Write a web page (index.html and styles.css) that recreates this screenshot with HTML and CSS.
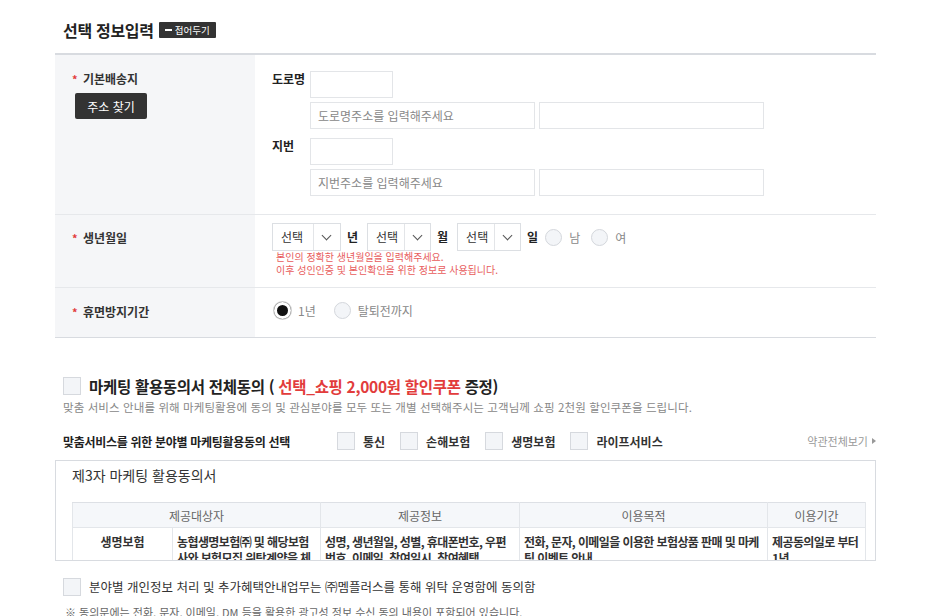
FILE: index.html
```html
<!DOCTYPE html>
<html lang="ko">
<head>
    <meta charset="UTF-8">
    <title>선택 정보입력</title>
    <link rel="stylesheet" href="styles.css">
</head>
<body>
    <div class="wrap">
        <div class="sec-head">
            <h2>선택 정보입력</h2>
            <span class="fold-btn"><i class="bar"></i>접어두기</span>
        </div>

        <div class="form">
            <div class="row row-addr">
                <div class="th">
                    <div class="label"><em>*</em> 기본배송지</div>
                    <button class="btn-dark">주소 찾기</button>
                </div>
                <div class="td">
                    <div class="addr">
                        <span class="addr-name">도로명</span>
                        <div class="addr-fields">
                            <div class="box zip"></div>
                            <div class="line">
                                <div class="box wide ph">도로명주소를 입력해주세요</div>
                                <div class="box wide"></div>
                            </div>
                        </div>
                    </div>
                    <div class="addr">
                        <span class="addr-name">지번</span>
                        <div class="addr-fields">
                            <div class="box zip"></div>
                            <div class="line">
                                <div class="box wide ph">지번주소를 입력해주세요</div>
                                <div class="box wide"></div>
                            </div>
                        </div>
                    </div>
                </div>
            </div>

            <div class="row row-birth">
                <div class="th"><div class="label"><em>*</em> 생년월일</div></div>
                <div class="td">
                    <div class="birth">
                        <div class="select first"><span>선택</span><i class="chev"></i></div>
                        <b>년</b>
                        <div class="select"><span>선택</span><i class="chev"></i></div>
                        <b>월</b>
                        <div class="select"><span>선택</span><i class="chev"></i></div>
                        <b>일</b>
                        <label class="radio"><i></i>남</label>
                        <label class="radio"><i></i>여</label>
                    </div>
                    <p class="warn">본인의 정확한 생년월일을 입력해주세요.<br>이후 성인인증 및 본인확인을 위한 정보로 사용됩니다.</p>
                </div>
            </div>

            <div class="row row-dormant">
                <div class="th"><div class="label"><em>*</em> 휴면방지기간</div></div>
                <div class="td">
                    <label class="radio on"><i></i>1년</label>
                    <label class="radio"><i></i>탈퇴전까지</label>
                </div>
            </div>
        </div>

        <div class="mkt">
            <div class="mkt-all">
                <i class="chk"></i>
                <h3>마케팅 활용동의서 전체동의 ( <span class="red">선택_쇼핑 2,000원 할인쿠폰</span> 증정)</h3>
            </div>
            <p class="mkt-desc">맞춤 서비스 안내를 위해 마케팅활용에 동의 및 관심분야를 모두 또는 개별 선택해주시는 고객님께 쇼핑 2천원 할인쿠폰을 드립니다.</p>

            <div class="mkt-pick">
                <span class="pick-title">맞춤서비스를 위한 분야별 마케팅활용동의 선택</span>
                <label class="pick"><i class="chk"></i>통신</label>
                <label class="pick"><i class="chk"></i>손해보험</label>
                <label class="pick"><i class="chk"></i>생명보험</label>
                <label class="pick"><i class="chk"></i>라이프서비스</label>
                <a class="more">약관전체보기 <span class="tri"></span></a>
            </div>

            <div class="terms">
                <div class="terms-title">제3자 마케팅 활용동의서</div>
                <table>
                    <colgroup>
                        <col class="w1"><col class="w2"><col class="w3"><col class="w4"><col>
                    </colgroup>
                    <thead>
                        <tr><th colspan="2">제공대상자</th><th>제공정보</th><th>이용목적</th><th>이용기간</th></tr>
                    </thead>
                    <tbody>
                        <tr>
                            <td class="c">생명보험</td>
                            <td>농협생명보험㈜ 및 해당보험사와 보험모집 위탁계약을 체결한 대리점</td>
                            <td>성명, 생년월일, 성별, 휴대폰번호, 우편번호, 이메일, 참여일시, 참여혜택</td>
                            <td>전화, 문자, 이메일을 이용한 보험상품 판매 및 마케팅 이벤트 안내</td>
                            <td>제공동의일로 부터 1년</td>
                        </tr>
                    </tbody>
                </table>
            </div>

            <div class="agree">
                <i class="chk"></i>
                <span>분야별 개인정보 처리 및 추가혜택안내업무는 ㈜멤플러스를 통해 위탁 운영함에 동의함</span>
            </div>
            <p class="note">※ 동의문에는 전화, 문자, 이메일, DM 등을 활용한 광고성 정보 수신 동의 내용이 포함되어 있습니다.</p>
        </div>
    </div>
</body>
</html>
```

FILE: styles.css
```css
* { margin: 0; padding: 0; box-sizing: border-box; }
body {
    font-family: "Noto Sans CJK KR", "Noto Sans", sans-serif;
    color: #222;
    background: #fff;
    overflow: hidden;
}
.wrap { width: 821px; margin-left: 55px; }

/* section head */
.sec-head {
    display: flex; align-items: center; gap: 5px;
    height: 53px; padding: 7px 0 0 8px;
}
.sec-head h2 { font-size: 16px; font-weight: 700; letter-spacing: -0.3px; }
.fold-btn {
    display: inline-flex; align-items: center; gap: 3px;
    background: #333; color: #fff; font-size: 9.5px;
    height: 16px; padding: 0 6px 0 6px; border-radius: 1px;
}
.fold-btn .bar { width: 7px; height: 2px; background: #fff; }

/* form table */
.form { border-top: 2px solid #d8dbe0; border-bottom: 1px solid #d8dbe0; }
.row { display: grid; grid-template-columns: 200px 1fr; border-top: 1px solid #e6e8eb; }
.row:first-child { border-top: 0; }
.th { background: #f5f6f8; padding-left: 17px; }
.label { font-size: 12px; font-weight: 700; color: #333; }
.label em { font-style: normal; color: #e23c3c; font-size: 11px; margin-right: 2px; }
.td { padding-left: 17px; font-size: 12px; }

.row-addr { height: 159px; }
.row-addr .th { padding-top: 15px; }
.btn-dark {
    display: block; margin: 6px 0 0 3px;
    width: 72px; height: 26px; border: 0; border-radius: 2px;
    background: #333; color: #fff; font-family: inherit; font-size: 12px;
}
.row-addr .td { padding-top: 16px; }
.addr { display: flex; margin-bottom: 9px; }
.addr-name { width: 38px; font-weight: 700; font-size: 12px; line-height: 17px; margin-top: -1px; }
.addr-fields { display: flex; flex-direction: column; gap: 4px; }
.line { display: flex; gap: 4px; }
.box { height: 27px; border: 1px solid #e3e5e8; background: #fff; }
.box.zip { width: 83px; }
.box.wide { width: 225px; }
.box.ph { color: #888; font-size: 12px; line-height: 25px; padding-left: 7px; }

.row-birth { height: 73px; }
.row-birth .th { padding-top: 14px; }
.row-birth .td { padding-top: 8px; }
.birth { display: flex; align-items: center; }
.birth b { font-size: 12px; font-weight: 700; margin: 0 9px 0 6px; line-height: 20px; }
.select {
    display: flex; width: 64px; height: 28px;
    border: 1px solid #dcdfe3; font-size: 12px; color: #333;
}
.select.first { width: 69px; }
.select span { width: 37px; line-height: 26px; padding-left: 8px; border-right: 1px solid #e3e5e8; }
.select.first span { width: 41px; }
.chev { flex: 1; position: relative; }
.chev::after {
    content: ""; position: absolute; left: 9px; top: 8px;
    width: 6px; height: 6px;
    border-right: 1px solid #555; border-bottom: 1px solid #555;
    transform: rotate(45deg);
}
.birth .radio { margin-right: 11px; }
.birth b + .radio { margin-left: -2px; }
.warn { color: #e85c5c; font-size: 10px; line-height: 13px; margin: -1px 0 0 4px; }

.radio { display: inline-flex; align-items: center; gap: 7px; color: #888; font-size: 12px; margin-right: 18px; }
.radio i {
    width: 17px; height: 17px; border-radius: 50%;
    border: 1px solid #d4d7dc; background: #f3f5f8;
}
.radio.on i { background: #111; border: 0; box-shadow: inset 0 0 0 3px #fff, 0 0 0 1px #ccc; }

.row-dormant { height: 50px; }
.row-dormant .th { display: flex; align-items: center; padding-bottom: 2px; }
.row-dormant .td { display: flex; align-items: center; padding-left: 19px; padding-bottom: 4px; }

/* marketing */
.mkt { padding-top: 37px; }
.mkt-all { display: flex; align-items: center; gap: 8px; padding-left: 8px; }
.chk {
    display: inline-block; width: 18px; height: 18px;
    border: 1px solid #d6d9de; background: #f3f5f8; flex: none;
}
.mkt-all h3 { font-size: 15.5px; font-weight: 700; color: #222; letter-spacing: -0.3px; }
.red { color: #e23c3c; }
.mkt-desc { font-size: 11.5px; color: #888; padding: 2px 0 0 8px; letter-spacing: 0.1px; }

.mkt-pick { display: flex; align-items: center; padding: 12px 0 0 8px; height: 40px; }
.pick-title { width: 274px; font-size: 12px; font-weight: 700; color: #222; letter-spacing: -0.3px; }
.pick { display: inline-flex; align-items: center; gap: 8px; font-size: 12px; font-weight: 700; color: #333; margin-right: 15px; }
.more { margin-left: auto; font-size: 11px; color: #999; display: flex; align-items: center; gap: 4px; }
.tri { width: 0; height: 0; border-left: 4px solid #999; border-top: 3px solid transparent; border-bottom: 3px solid transparent; }

.terms {
    margin-top: 5px; height: 101px; overflow: hidden;
    border: 1px solid #d8dbe0; padding: 0 9px 0 16px;
}
.terms-title { font-size: 14px; color: #333; height: 41px; line-height: 28px; }
.terms table { width: 794px; border-collapse: collapse; font-size: 12px; table-layout: fixed; }
.w1 { width: 100px; }
.w2 { width: 148px; }
.w3 { width: 199px; }
.w4 { width: 248px; }
.terms th {
    background: #f5f7fa; color: #666; font-weight: 400;
    height: 25px; border: 1px solid #e3e6ea; border-top: 1px solid #dde0e5;
}
.terms td {
    border: 1px solid #e3e6ea; font-weight: 700; color: #333;
    line-height: 16px; padding: 6px 4px 4px; vertical-align: top; letter-spacing: -0.6px;
}
.terms td.c { text-align: center; letter-spacing: 0; }

.agree { display: flex; align-items: center; gap: 8px; padding: 16px 0 0 8px; font-size: 12.5px; color: #333; }
.note { font-size: 11px; color: #666; padding: 8px 0 0 10px; }
```
